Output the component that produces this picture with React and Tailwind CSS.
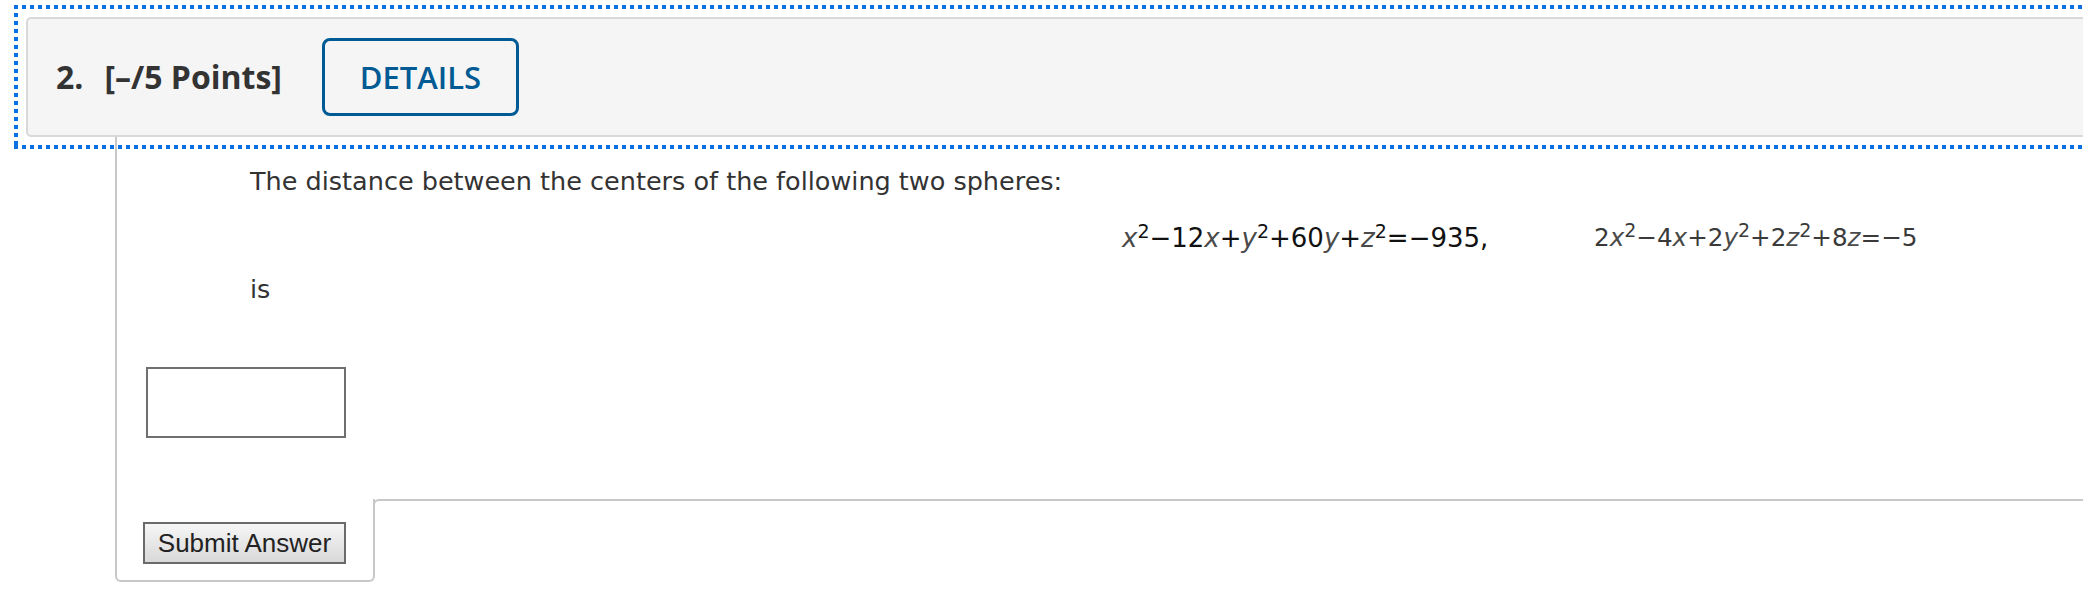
import React from "react";

const V = ({ children }) => <i className="italic text-[#4a4a4a]">{children}</i>;
const S = ({ children }) => <sup className="text-[19px]">{children}</sup>;

export default function App() {
  return (
    <div className="w-[2083px] h-[611px] overflow-hidden bg-white">
      <div className="mt-[5px] ml-[14px] w-[2200px] p-[12px] [background:repeating-linear-gradient(90deg,#0b70e0_0_4px,transparent_4px_8px)_left_top/100%_4px_no-repeat,repeating-linear-gradient(90deg,#0b70e0_0_4px,transparent_4px_8px)_left_bottom/100%_4px_no-repeat,repeating-linear-gradient(180deg,#0b70e0_0_4px,transparent_4px_8px)_left_top/4px_100%_no-repeat]">
        <div className="h-[120px] border-2 border-[#d9d9d9] bg-[#f5f5f5] rounded-[5px] flex items-center pl-[28px] font-['Open_Sans',sans-serif] text-[32px] text-[#333]">
          <span className="font-bold">2.</span>
          <span className="font-bold ml-[21px]">[–/5 Points]</span>
          <div className="ml-[40px] w-[197px] h-[78px] border-[3px] border-[#005a93] rounded-[8px] flex items-center justify-center font-semibold text-[#005a93] text-[31px]">
            DETAILS
          </div>
        </div>
      </div>

      <div className="-mt-[12px] ml-[115px] border-l-2 border-[#c8c8c8] pt-[28px] pb-[61px] font-['DejaVu_Sans',sans-serif] text-[25.5px] leading-[32px] text-[#333]">
        <p className="pl-[133px]">The distance between the centers of the following two spheres:</p>
        <div className="flex mt-[25px] pl-[1005px] whitespace-nowrap">
          <div className="w-[472px] text-[#111] text-[26px]">
            <V>x</V><S>2</S>−12<V>x</V>+<V>y</V><S>2</S>+60<V>y</V>+<V>z</V><S>2</S>=−935,
          </div>
          <div className="text-[#3a3a3a] text-[24.6px]">
            2<V>x</V><S>2</S>−4<V>x</V>+2<V>y</V><S>2</S>+2<V>z</V><S>2</S>+8<V>z</V>=−5
          </div>
        </div>
        <p className="pl-[133px] mt-[19px]">is</p>
        <div className="ml-[29px] mt-[62px] w-[200px] h-[71px] border-2 border-[#6f6f6f] bg-white"></div>
      </div>

      <div className="flex">
        <div className="ml-[115px] w-[260px] border-l-2 border-r-2 border-b-2 border-[#c8c8c8] rounded-b-[6px] pt-[23px] pb-[16px] pl-[26px]">
          <button className="w-[203px] h-[42px] border-2 border-[#6a6a6a] bg-linear-to-b from-[#f6f6f6] to-[#d9d9d9] font-['Liberation_Sans',Arial,sans-serif] text-[26px] leading-none text-[#222]">
            Submit Answer
          </button>
        </div>
        <div className="flex-1 -ml-[2px] h-[12px] border-t-2 border-l-2 border-[#c8c8c8] rounded-tl-[6px]"></div>
      </div>
    </div>
  );
}
